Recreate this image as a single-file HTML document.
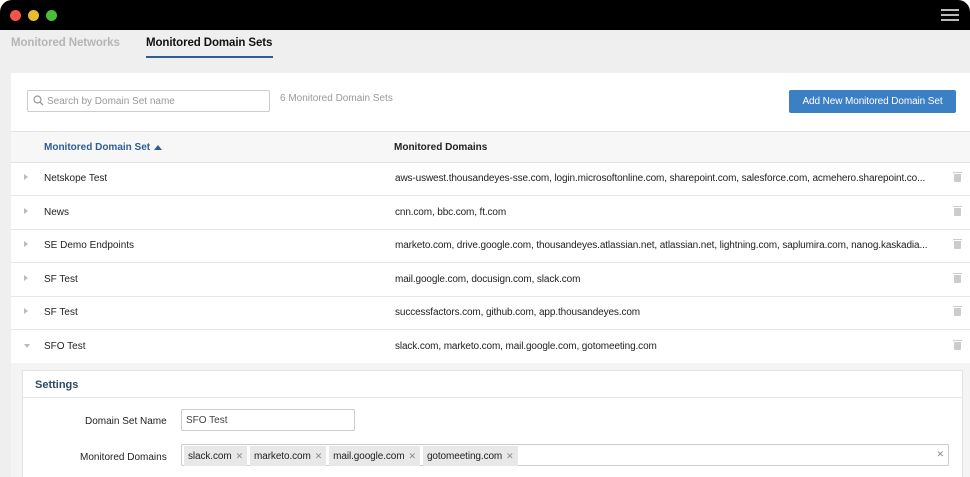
<!DOCTYPE html><html><head><style>
body{margin:0;width:970px;height:477px;overflow:hidden;background:#fff;font-family:"Liberation Sans",Arial,sans-serif;font-size:10px;color:#222}
.win{position:absolute;left:0;top:0;width:970px;height:477px;background:#efefef;border-radius:12px 12px 0 0;overflow:hidden}
.bar{position:absolute;left:0;top:0;width:970px;height:30px;background:#000}
.dot{position:absolute;top:10px;width:11px;height:11px;border-radius:50%}
.ham{position:absolute;right:11px;width:18px;height:2px;background:#bbb}
.tab{position:absolute;top:37px;font-size:11.5px;font-weight:bold;letter-spacing:-0.1px}
.card{position:absolute;left:11px;top:73px;width:959px;height:404px;background:#fff}
.abs{position:absolute}
.row{position:absolute;left:0;width:959px;height:33px;border-bottom:1px solid #e6e6e6}
.row .n{position:absolute;left:33px;top:11px}
.row .d{position:absolute;left:384px;top:11px;letter-spacing:-0.12px}
.row .c{position:absolute;left:13px;top:12px;width:0;height:0;border-top:3px solid transparent;border-bottom:3px solid transparent;border-left:4px solid #bbb}
.row .t{position:absolute;left:943px;top:12px;width:7px;height:8px;background:#ccc;border-radius:0 0 1px 1px}
.row .t:before{content:"";position:absolute;left:-1px;top:-2px;width:9px;height:1px;background:#ccc}
.chip{display:inline-block;background:#e8e8e8;padding:0 4px;height:20px;line-height:20px;margin-right:3px;font-size:10px;letter-spacing:-0.1px}
.chip b{color:#888;font-weight:normal;margin-left:4px;font-size:9px}
</style></head><body><div class="win">
<div class="bar"><div class="dot" style="left:10px;background:#f4544d"></div><div class="dot" style="left:28px;background:#e6bb2d"></div><div class="dot" style="left:46px;background:#4cbd3b"></div>
<div class="ham" style="top:9px"></div><div class="ham" style="top:14px"></div><div class="ham" style="top:19px"></div></div>
<div class="tab" style="left:11px;color:#b5b5b5">Monitored Networks</div>
<div class="tab" style="left:146px;color:#111">Monitored Domain Sets</div>
<div class="abs" style="left:146px;top:56px;width:127px;height:2px;background:#2d5d96"></div>
<div class="card">
<div class="abs" style="left:16px;top:17px;width:241px;height:20px;border:1px solid #ccc;border-radius:2px"><svg class="abs" style="left:5px;top:4px" width="11" height="11" viewBox="0 0 11 11"><circle cx="4.5" cy="4.5" r="3.5" fill="none" stroke="#999" stroke-width="1.2"/><line x1="7" y1="7" x2="10" y2="10" stroke="#999" stroke-width="1.3"/></svg><span class="abs" style="left:19px;top:5px;color:#999">Search by Domain Set name</span></div>
<div class="abs" style="left:269px;top:20px;color:#999">6 Monitored Domain Sets</div>
<div class="abs" style="left:778px;top:17px;width:167px;height:23px;background:#3b7fc4;border-radius:2px;color:#fff;text-align:center;line-height:23px;letter-spacing:-0.1px">Add New Monitored Domain Set</div>
<div class="abs" style="left:0;top:58px;width:959px;height:30px;background:#f7f7f7;border-top:1px solid #e3e3e3;border-bottom:1px solid #e3e3e3">
<span class="abs" style="left:33px;top:10px;color:#2d5d96;font-weight:bold">Monitored Domain Set</span>
<span class="abs" style="left:143px;top:13px;width:0;height:0;border-left:4px solid transparent;border-right:4px solid transparent;border-bottom:5px solid #2d5d96"></span>
<span class="abs" style="left:383px;top:10px;font-weight:bold">Monitored Domains</span></div>
<div class="row" style="top:89px"><i class="c"></i><span class="n">Netskope Test</span><span class="d">aws-uswest.thousandeyes-sse.com, login.microsoftonline.com, sharepoint.com, salesforce.com, acmehero.sharepoint.co...</span><i class="t"></i></div>
<div class="row" style="top:123px"><i class="c"></i><span class="n">News</span><span class="d">cnn.com, bbc.com, ft.com</span><i class="t"></i></div>
<div class="row" style="top:156px"><i class="c"></i><span class="n">SE Demo Endpoints</span><span class="d">marketo.com, drive.google.com, thousandeyes.atlassian.net, atlassian.net, lightning.com, saplumira.com, nanog.kaskadia...</span><i class="t"></i></div>
<div class="row" style="top:190px"><i class="c"></i><span class="n">SF Test</span><span class="d">mail.google.com, docusign.com, slack.com</span><i class="t"></i></div>
<div class="row" style="top:223px"><i class="c"></i><span class="n">SF Test</span><span class="d">successfactors.com, github.com, app.thousandeyes.com</span><i class="t"></i></div>
<div class="row" style="top:257px;border:none"><i class="c" style="border:none;border-left:3px solid transparent;border-right:3px solid transparent;border-top:4px solid #bbb;top:14px"></i><span class="n">SFO Test</span><span class="d">slack.com, marketo.com, mail.google.com, gotomeeting.com</span><i class="t"></i></div>
<div class="abs" style="left:0;top:290px;width:959px;height:114px;background:#f4f4f4"></div>
<div class="abs" style="left:11px;top:297px;width:939px;height:110px;background:#fff;border:1px solid #e3e3e3">
<div class="abs" style="left:0;top:0;width:939px;height:26px;border-bottom:1px solid #e6e6e6"><span class="abs" style="left:12px;top:8px;font-weight:bold;color:#2d4a60;font-size:11px">Settings</span></div>
<div class="abs" style="left:62px;top:45px">Domain Set Name</div>
<div class="abs" style="left:158px;top:38px;width:172px;height:20px;border:1px solid #ccc;border-radius:2px"><span class="abs" style="left:4px;top:5px;color:#444">SFO Test</span></div>
<div class="abs" style="left:57px;top:81px">Monitored Domains</div>
<div class="abs" style="left:158px;top:73px;width:768px;height:22px;border:1px solid #ccc;border-radius:2px;padding:1px 2px;box-sizing:border-box;"><span class="chip">slack.com<b>✕</b></span><span class="chip">marketo.com<b>✕</b></span><span class="chip">mail.google.com<b>✕</b></span><span class="chip">gotomeeting.com<b>✕</b></span><span class="abs" style="right:4px;top:4px;color:#888;font-size:9px">✕</span></div>
</div>
</div></div></body></html>
